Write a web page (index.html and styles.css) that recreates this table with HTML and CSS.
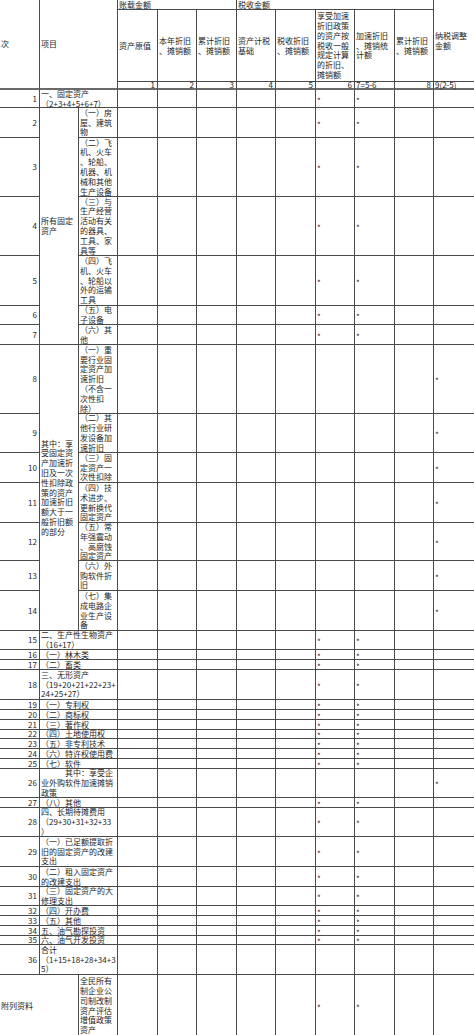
FILE: index.html
```html
<!DOCTYPE html>
<html lang="zh-CN">
<head>
<meta charset="utf-8">
<title>资产折旧、摊销及纳税调整明细表</title>
<link rel="stylesheet" href="styles.css">
</head>
<body>
<div class="sheet">
  <div class="r3 c1 hb">次</div>
  <div class="r3 c2 hb">项目</div>
  <div class="c3">账载金额</div>
  <div class="c5">税收金额</div>
  <div class="r2"><p>纳税调整<br>金额</p></div>
  <div>资产原值</div>
  <div><p>本年折旧<br>、摊销额</p></div>
  <div><p>累计折旧<br>、摊销额</p></div>
  <div><p>资产计税<br>基础</p></div>
  <div><p>税收折旧<br>、摊销额</p></div>
  <div><p>享受加速<br>折旧政策<br>的资产按<br>税收一般<br>规定计算<br>的折旧、<br>摊销额</p></div>
  <div><p>加速折旧<br>、摊销统<br>计额</p></div>
  <div><p>累计折旧<br>、摊销额</p></div>
  <div class="n hb">1</div>
  <div class="n hb">2</div>
  <div class="n hb">3</div>
  <div class="n hb">4</div>
  <div class="n hb">5</div>
  <div class="n hb">6</div>
  <div class="hb">7=5-6</div>
  <div class="n hb">8</div>
  <div class="hb">9(2-5)</div>

  <div class="n">1</div><div class="c2"><p>一、固定资产<br>（2+3+4+5+6+7）</p></div>
  <div></div><div></div><div></div><div></div><div></div><div class="s">*</div><div class="s">*</div><div></div><div></div>

  <div class="n">2</div><div class="r6"><p>所有固定<br>资产</p></div><div><p>（一）房<br>屋、建筑<br>物</p></div>
  <div></div><div></div><div></div><div></div><div></div><div class="s">*</div><div class="s">*</div><div></div><div></div>

  <div class="n">3</div><div><p>（二）飞<br>机、火车<br>、轮船、<br>机器、机<br>械和其他<br>生产设备</p></div>
  <div></div><div></div><div></div><div></div><div></div><div class="s">*</div><div class="s">*</div><div></div><div></div>

  <div class="n">4</div><div><p>（三）与<br>生产经营<br>活动有关<br>的器具、<br>工具、家<br>具等</p></div>
  <div></div><div></div><div></div><div></div><div></div><div class="s">*</div><div class="s">*</div><div></div><div></div>

  <div class="n">5</div><div><p>（四）飞<br>机、火车<br>、轮船以<br>外的运输<br>工具</p></div>
  <div></div><div></div><div></div><div></div><div></div><div class="s">*</div><div class="s">*</div><div></div><div></div>

  <div class="n">6</div><div><p>（五）电<br>子设备</p></div>
  <div></div><div></div><div></div><div></div><div></div><div class="s">*</div><div class="s">*</div><div></div><div></div>

  <div class="n">7</div><div><p>（六）其<br>他</p></div>
  <div></div><div></div><div></div><div></div><div></div><div class="s">*</div><div class="s">*</div><div></div><div></div>

  <div class="n">8</div><div class="r7"><p>其中：享<br>受固定资<br>产加速折<br>旧及一次<br>性扣除政<br>策的资产<br>加速折旧<br>额大于一<br>般折旧额<br>的部分</p></div><div><p>（一）重<br>要行业固<br>定资产加<br>速折旧<br>（不含一<br>次性扣<br>除）</p></div>
  <div></div><div></div><div></div><div></div><div></div><div></div><div></div><div></div><div class="s">*</div>

  <div class="n">9</div><div><p>（二）其<br>他行业研<br>发设备加<br>速折旧</p></div>
  <div></div><div></div><div></div><div></div><div></div><div></div><div></div><div></div><div class="s">*</div>

  <div class="n">10</div><div><p>（三）固<br>定资产一<br>次性扣除</p></div>
  <div></div><div></div><div></div><div></div><div></div><div></div><div></div><div></div><div class="s">*</div>

  <div class="n">11</div><div><p>（四）技<br>术进步、<br>更新换代<br>固定资产</p></div>
  <div></div><div></div><div></div><div></div><div></div><div></div><div></div><div></div><div class="s">*</div>

  <div class="n">12</div><div><p>（五）常<br>年强震动<br>、高腐蚀<br>固定资产</p></div>
  <div></div><div></div><div></div><div></div><div></div><div></div><div></div><div></div><div class="s">*</div>

  <div class="n">13</div><div><p>（六）外<br>购软件折<br>旧</p></div>
  <div></div><div></div><div></div><div></div><div></div><div></div><div></div><div></div><div class="s">*</div>

  <div class="n">14</div><div><p>（七）集<br>成电路企<br>业生产设<br>备</p></div>
  <div></div><div></div><div></div><div></div><div></div><div></div><div></div><div></div><div class="s">*</div>

  <div class="n">15</div><div class="c2"><p>二、生产性生物资产<br>（16+17）</p></div>
  <div></div><div></div><div></div><div></div><div></div><div class="s">*</div><div class="s">*</div><div></div><div></div>

  <div class="n">16</div><div class="c2">（一）林木类</div>
  <div></div><div></div><div></div><div></div><div></div><div class="s">*</div><div class="s">*</div><div></div><div></div>

  <div class="n">17</div><div class="c2">（二）畜类</div>
  <div></div><div></div><div></div><div></div><div></div><div class="s">*</div><div class="s">*</div><div></div><div></div>

  <div class="n">18</div><div class="c2"><p>三、无形资产<br>（19+20+21+22+23+<br>24+25+27）</p></div>
  <div></div><div></div><div></div><div></div><div></div><div class="s">*</div><div class="s">*</div><div></div><div></div>

  <div class="n">19</div><div class="c2">（一）专利权</div>
  <div></div><div></div><div></div><div></div><div></div><div class="s">*</div><div class="s">*</div><div></div><div></div>

  <div class="n">20</div><div class="c2">（二）商标权</div>
  <div></div><div></div><div></div><div></div><div></div><div class="s">*</div><div class="s">*</div><div></div><div></div>

  <div class="n">21</div><div class="c2">（三）著作权</div>
  <div></div><div></div><div></div><div></div><div></div><div class="s">*</div><div class="s">*</div><div></div><div></div>

  <div class="n">22</div><div class="c2">（四）土地使用权</div>
  <div></div><div></div><div></div><div></div><div></div><div class="s">*</div><div class="s">*</div><div></div><div></div>

  <div class="n">23</div><div class="c2">（五）非专利技术</div>
  <div></div><div></div><div></div><div></div><div></div><div class="s">*</div><div class="s">*</div><div></div><div></div>

  <div class="n">24</div><div class="c2">（六）特许权使用费</div>
  <div></div><div></div><div></div><div></div><div></div><div class="s">*</div><div class="s">*</div><div></div><div></div>

  <div class="n">25</div><div class="c2">（七）软件</div>
  <div></div><div></div><div></div><div></div><div></div><div class="s">*</div><div class="s">*</div><div></div><div></div>

  <div class="n">26</div><div class="c2"><p>　　　其中：享受企<br>业外购软件加速摊销<br>政策</p></div>
  <div></div><div></div><div></div><div></div><div></div><div></div><div></div><div></div><div class="s">*</div>

  <div class="n">27</div><div class="c2">（八）其他</div>
  <div></div><div></div><div></div><div></div><div></div><div class="s">*</div><div class="s">*</div><div></div><div></div>

  <div class="n">28</div><div class="c2"><p>四、长期待摊费用<br>（29+30+31+32+33<br>）</p></div>
  <div></div><div></div><div></div><div></div><div></div><div class="s">*</div><div class="s">*</div><div></div><div></div>

  <div class="n">29</div><div class="c2"><p>（一）已足额提取折<br>旧的固定资产的改建<br>支出</p></div>
  <div></div><div></div><div></div><div></div><div></div><div class="s">*</div><div class="s">*</div><div></div><div></div>

  <div class="n">30</div><div class="c2"><p>（二）租入固定资产<br>的改建支出</p></div>
  <div></div><div></div><div></div><div></div><div></div><div class="s">*</div><div class="s">*</div><div></div><div></div>

  <div class="n">31</div><div class="c2"><p>（三）固定资产的大<br>修理支出</p></div>
  <div></div><div></div><div></div><div></div><div></div><div class="s">*</div><div class="s">*</div><div></div><div></div>

  <div class="n">32</div><div class="c2">（四）开办费</div>
  <div></div><div></div><div></div><div></div><div></div><div class="s">*</div><div class="s">*</div><div></div><div></div>

  <div class="n">33</div><div class="c2">（五）其他</div>
  <div></div><div></div><div></div><div></div><div></div><div class="s">*</div><div class="s">*</div><div></div><div></div>

  <div class="n">34</div><div class="c2">五、油气勘探投资</div>
  <div></div><div></div><div></div><div></div><div></div><div class="s">*</div><div class="s">*</div><div></div><div></div>

  <div class="n">35</div><div class="c2">六、油气开发投资</div>
  <div></div><div></div><div></div><div></div><div></div><div class="s">*</div><div class="s">*</div><div></div><div></div>

  <div class="n">36</div><div class="c2"><p>合计<br>（1+15+18+28+34+3<br>5）</p></div>
  <div></div><div></div><div></div><div></div><div></div><div></div><div></div><div></div><div></div>

  <div class="c2">附列资料</div><div><p>全民所有<br>制企业公<br>司制改制<br>资产评估<br>增值政策<br>资产</p></div>
  <div></div><div></div><div></div><div></div><div></div><div class="s">*</div><div class="s">*</div><div></div><div></div>
</div>
</body>
</html>
```

FILE: styles.css
```css
* {
  box-sizing: border-box;
}

html,
body {
  margin: 0;
  overflow: hidden;
  background: #fff;
}

.sheet {
  display: grid;
  width: 474px;
  overflow: hidden;
  grid-template-columns: 40px 39px 39px 40px 39px 40px 39px 40px 39px 40px 39px 41px;
  grid-template-rows:
    10px 72px 8px
    18px 30px 59px 59px 50px 19px 20px
    69px 39px 30px 40px 38px 30px 40px
    19px 10px 10px 30px
    10px 10px 10px 9px 10px 10px 10px
    29px 10px 29px 30px 20px 19px
    10px 10px 10px 9px
    30px 62px;
  font-family: "Noto Sans CJK SC", "Liberation Sans", sans-serif;
  font-size: 8px;
  line-height: 9.8px;
  color: #1e1e1e;
}

.sheet > div {
  display: flex;
  align-items: center;
  min-width: 0;
  padding: 0 1px;
  white-space: nowrap;
  border-right: 1px solid #4a4a4a;
  border-bottom: 1px solid #4a4a4a;
}

.sheet p {
  margin: 0;
}

.n {
  justify-content: flex-end;
  padding-right: 2px !important;
}

.s {
  padding-top: 4px !important;
}

.hb {
  border-bottom: 2px solid #6a6a6a !important;
}

.c2 { grid-column: span 2; }
.c3 { grid-column: span 3; }
.c5 { grid-column: span 5; }
.r2 { grid-row: span 2; }
.r3 { grid-row: span 3; }
.r6 { grid-row: span 6; }
.r7 { grid-row: span 7; }
```
